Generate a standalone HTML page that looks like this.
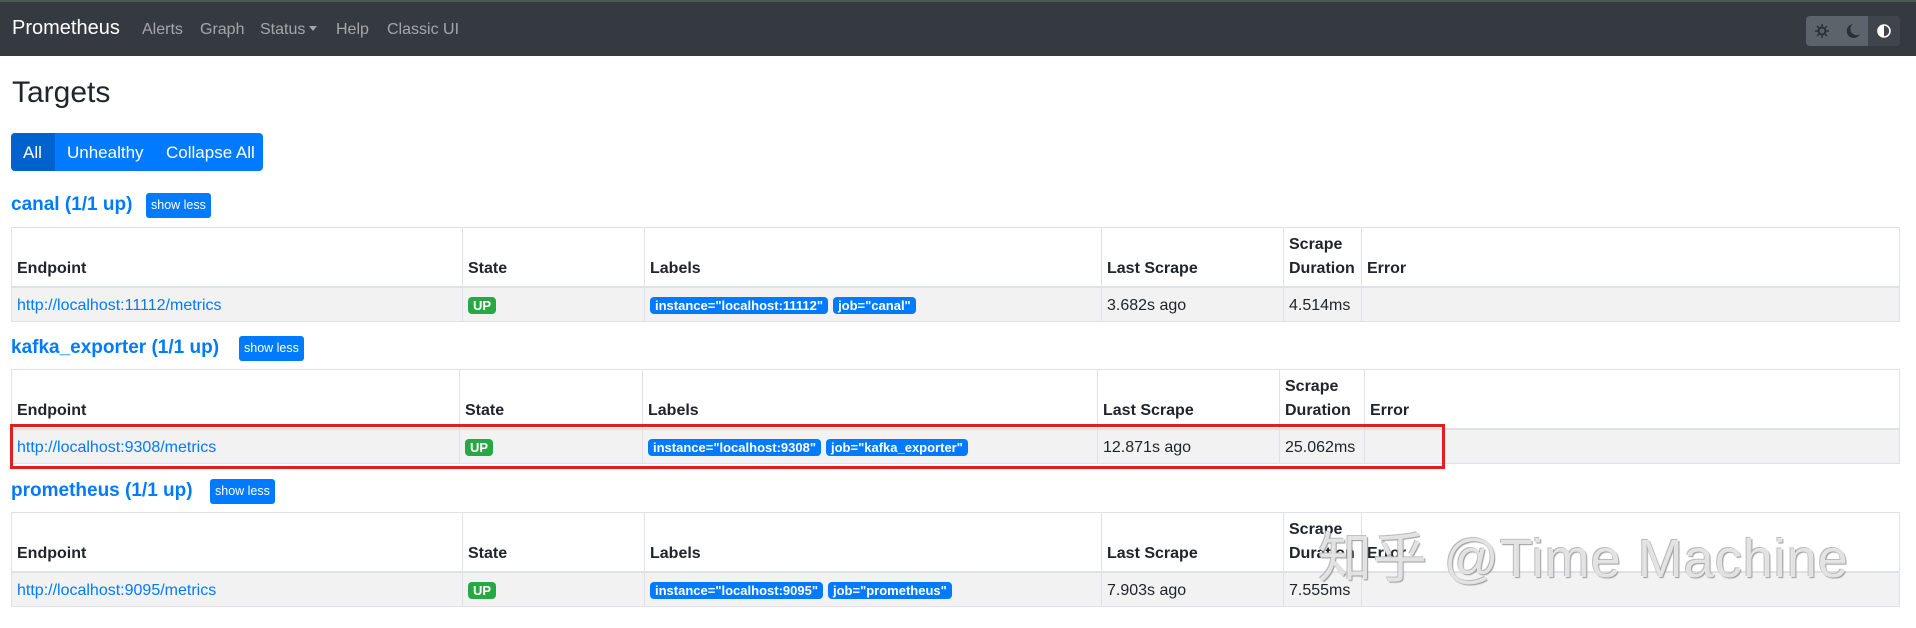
<!DOCTYPE html>
<html><head><meta charset="utf-8"><style>
*{box-sizing:border-box;margin:0;padding:0}
body{width:1916px;height:628px;overflow:hidden;background:#fff;font-family:"Liberation Sans",Arial,sans-serif;color:#212529;position:relative;font-size:16px}
.nav{position:absolute;left:0;top:0;width:1916px;height:56px;background:#343a40;border-top:2px solid #4a5a52}
.brand{position:absolute;left:12px;top:15px;color:#fff;font-size:20px}
.nl{position:absolute;top:19px;color:rgba(255,255,255,.55);font-size:16px}
.caret{display:inline-block;width:0;height:0;border-left:4px solid transparent;border-right:4px solid transparent;border-top:5px solid rgba(255,255,255,.55);vertical-align:3px;margin-left:4px}
.tog{position:absolute;left:1806px;top:14px;width:94px;height:30px;background:#5c636a;border-radius:4px;overflow:hidden}
.tog .d{position:absolute;left:62px;top:0;width:32px;height:30px;background:#3f454b}
h1{position:absolute;left:12px;top:76px;font-size:30px;font-weight:500}
.bg{position:absolute;left:11px;top:133px;height:38px;width:252px;background:#007bff;border-radius:4px;overflow:hidden;color:#fff;font-size:17px}
.bg span{position:absolute;top:10px}
.bg .a{position:absolute;left:0;top:0;width:44px;height:38px;background:#0062cc}
.h{position:absolute;left:11px;font-size:19px;font-weight:bold;color:#007bff;white-space:nowrap}
.sl{position:absolute;background:#007bff;color:#fff;font-size:12.5px;border-radius:3px;height:25px;line-height:25px;padding:0 5px;font-weight:normal;white-space:nowrap}
table{position:absolute;left:11px;width:1889px;border-collapse:collapse;table-layout:fixed}
td,th{border:1px solid #dee2e6;padding:0 5px;text-align:left;vertical-align:bottom;font-size:16px}
th{height:59px;border-bottom:2px solid #dee2e6;padding-bottom:5px;line-height:24px;font-weight:bold}
td{height:35px;background:#f2f2f2;vertical-align:middle;padding-top:3px}
a{color:#007bff;text-decoration:none}
.b{display:inline-block;color:#fff;font-weight:bold;font-size:13px;border-radius:4px;padding:1px 5px;line-height:15px;margin-right:5px}
.up{background:#28a745}.lb{background:#007bff}
.red{position:absolute;left:10px;top:424px;width:1435px;height:45px;border:3px solid #e02020}
.wm{position:absolute;left:1318px;top:514px;font-size:54px;color:rgba(238,238,238,.85);text-shadow:1px 1px 1px #999,-1px -1px 0 #bbb;font-family:"Liberation Sans","Noto Sans CJK SC",sans-serif;letter-spacing:1px;white-space:nowrap}
</style></head><body>
<div class="nav">
<span class="brand">Prometheus</span>
<span class="nl" style="left:142px">Alerts</span>
<span class="nl" style="left:200px">Graph</span>
<span class="nl" style="left:260px">Status<i class="caret"></i></span>
<span class="nl" style="left:336px">Help</span>
<span class="nl" style="left:387px">Classic UI</span>
<div class="tog"><div class="d"></div>
<svg style="position:absolute;left:0;top:0" width="94" height="30"><g fill="#2b3035" stroke="#2b3035"><circle cx="16" cy="15" r="3.5" fill="none" stroke-width="2"/><path d="M16 8v3M16 19v3M9 15h3M20 15h3M11 10l2 2M19 18l2 2M11 20l2-2M19 12l2-2" stroke-width="1.5"/><path d="M47 8a7 7 0 1 0 7 10a6 6 0 0 1-7-10z" stroke="none"/></g><circle cx="78" cy="15" r="6" fill="none" stroke="#fff" stroke-width="1.6"/><path d="M78 9a6 6 0 0 0 0 12z" fill="#fff"/></svg></div>
</div>
<h1>Targets</h1>
<div class="bg"><div class="a"></div><span style="left:12px">All</span><span style="left:56px">Unhealthy</span><span style="left:155px">Collapse All</span></div>

<div class="h" style="top:194px">canal (1/1 up)<span class="sl" style="left:135px;top:-1px">show less</span></div>
<table style="top:227px"><colgroup><col style="width:451px"><col style="width:182px"><col style="width:457px"><col style="width:182px"><col style="width:78px"><col></colgroup>
<tr><th>Endpoint</th><th>State</th><th>Labels</th><th>Last Scrape</th><th>Scrape Duration</th><th>Error</th></tr>
<tr><td><a>http://localhost:11112/metrics</a></td><td><span class="b up">UP</span></td><td><span class="b lb">instance="localhost:11112"</span><span class="b lb">job="canal"</span></td><td>3.682s ago</td><td>4.514ms</td><td></td></tr></table>

<div class="h" style="top:337px">kafka_exporter (1/1 up)<span class="sl" style="left:228px;top:-1px">show less</span></div>
<table style="top:369px"><colgroup><col style="width:448px"><col style="width:183px"><col style="width:455px"><col style="width:182px"><col style="width:85px"><col></colgroup>
<tr><th>Endpoint</th><th>State</th><th>Labels</th><th>Last Scrape</th><th>Scrape Duration</th><th>Error</th></tr>
<tr><td><a>http://localhost:9308/metrics</a></td><td><span class="b up">UP</span></td><td><span class="b lb">instance="localhost:9308"</span><span class="b lb">job="kafka_exporter"</span></td><td>12.871s ago</td><td>25.062ms</td><td></td></tr></table>
<div class="red"></div>

<div class="h" style="top:480px">prometheus (1/1 up)<span class="sl" style="left:199px;top:-1px">show less</span></div>
<table style="top:512px"><colgroup><col style="width:451px"><col style="width:182px"><col style="width:457px"><col style="width:182px"><col style="width:78px"><col></colgroup>
<tr><th>Endpoint</th><th>State</th><th>Labels</th><th>Last Scrape</th><th>Scrape Duration</th><th>Error</th></tr>
<tr><td><a>http://localhost:9095/metrics</a></td><td><span class="b up">UP</span></td><td><span class="b lb">instance="localhost:9095"</span><span class="b lb">job="prometheus"</span></td><td>7.903s ago</td><td>7.555ms</td><td></td></tr></table>
<div class="wm">知乎 @Time Machine</div>
</body></html>
